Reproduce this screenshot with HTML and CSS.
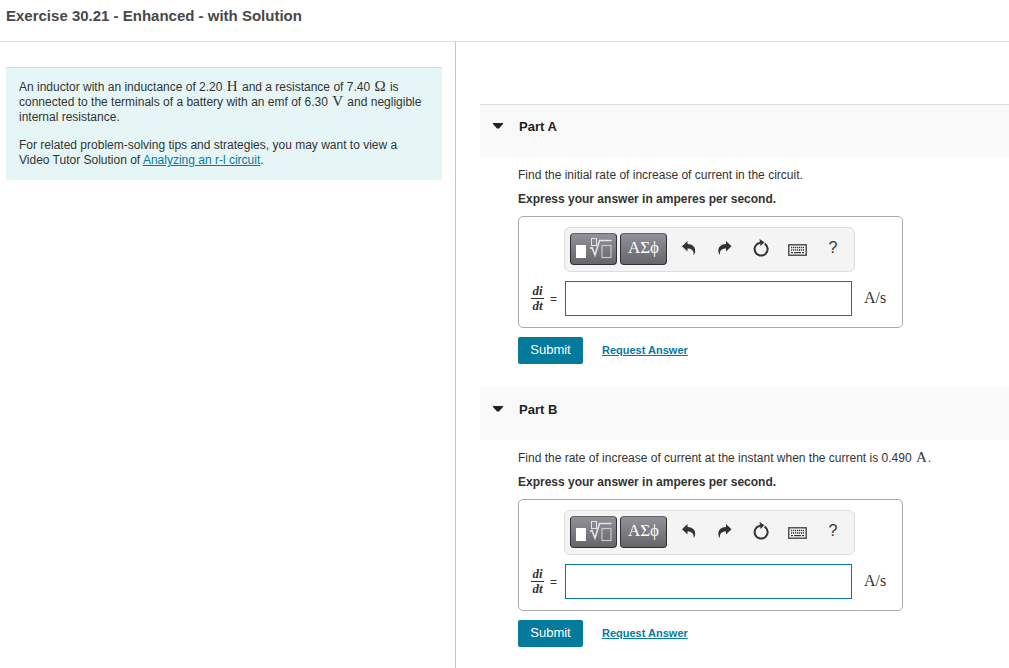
FILE: index.html
```html
<!DOCTYPE html>
<html lang="en">
<head>
<meta charset="utf-8">
<meta name="viewport" content="width=device-width, initial-scale=1">
<title>Exercise 30.21 - Enhanced - with Solution</title>
<link rel="stylesheet" href="styles.css">
</head>
<body>
<svg class="sprite" aria-hidden="true">
  <symbol id="caret" viewBox="0 0 10 6"><path d="M0 0H10V1L6 5.500H4L0 1Z" fill="#222"/></symbol>
  <symbol id="template" viewBox="0 0 36 22">
    <rect x="0" y="8" width="10" height="13" fill="#fff"/>
    <rect x="15.500" y="1.500" width="5" height="7" fill="none" stroke="#e4e4e8"/>
    <path d="M14 11.500L16 10.500L19 18L23.500 3.500H35.500" fill="none" stroke="#e4e4e8" stroke-width="1.600"/>
    <rect x="26" y="8.500" width="9" height="12" fill="none" stroke="#c9c9ce" stroke-width="1.200"/>
  </symbol>
  <symbol id="undo" viewBox="0 0 14 14"><path d="M0 5.200L5.500 0V3C10.500 3 13.200 6 13.200 9.500C13.200 11.500 12.500 13 11.600 14C12 10 10 7.600 5.500 7.600V10.400Z" fill="#333"/></symbol>
  <symbol id="redo" viewBox="0 0 14 14"><path d="M13.500 5.200L8 0V3C3 3 .3 6 .3 9.500C.3 11.500 1 13 1.900 14C1.500 10 3.500 7.600 8 7.600V10.400Z" fill="#333"/></symbol>
  <symbol id="reset" viewBox="0 0 16 18"><path d="M11.600 4.600A6.500 6.500 0 1 1 7 3.700" fill="none" stroke="#333" stroke-width="2"/><path d="M6.500 0L11.500 3.300L7.500 7Z" fill="#333"/></symbol>
  <symbol id="keyboard" viewBox="0 0 19 12">
    <rect x=".8" y=".8" width="17.400" height="10.400" fill="#fff" stroke="#444" stroke-width="1.400"/>
    <path d="M3 3.500H16M3 6H16" stroke="#333" stroke-width="1.500" stroke-dasharray="1.300 .7"/>
    <path d="M3 8.600H5M6 8.600H13M14 8.600H16" stroke="#333" stroke-width="1.300"/>
  </symbol>
</svg>

<header class="page-header">
  <h1 class="page-title">Exercise 30.21 - Enhanced - with Solution</h1>
</header>

<div class="columns">
  <aside class="intro-column">
    <div class="intro">
      <p>An inductor with an inductance of 2.20 <span class="unit">H</span> and a resistance of 7.40 <span class="unit">Ω</span> is connected to the terminals of a battery with an emf of 6.30 <span class="unit">V</span> and negligible internal resistance.</p>
      <p>For related problem-solving tips and strategies, you may want to view a Video Tutor Solution of <a href="#">Analyzing an r-l circuit</a>.</p>
    </div>
  </aside>

  <main class="parts">
    <section class="part">
      <div class="part-header">
        <button class="toggle" type="button" aria-label="Collapse Part A"><svg width="10" height="6"><use href="#caret"/></svg></button>
        <h2 class="part-title">Part A</h2>
      </div>
      <form class="part-body">
        <p class="question">Find the initial rate of increase of current in the circuit.</p>
        <p class="instruction">Express your answer in amperes per second.</p>
        <div class="answer">
          <div class="toolbar">
            <button class="palette" type="button" aria-label="Templates"><svg width="36" height="22"><use href="#template"/></svg></button>
            <button class="palette" type="button">ΑΣϕ</button>
            <div class="tools">
              <button class="tool" type="button" aria-label="Undo"><svg width="14" height="14"><use href="#undo"/></svg></button>
              <button class="tool" type="button" aria-label="Redo"><svg width="14" height="14"><use href="#redo"/></svg></button>
              <button class="tool" type="button" aria-label="Reset"><svg width="16" height="18"><use href="#reset"/></svg></button>
              <button class="tool" type="button" aria-label="Keyboard shortcuts"><svg class="keyboard" width="19" height="12"><use href="#keyboard"/></svg></button>
              <button class="tool help" type="button">?</button>
            </div>
          </div>
          <label class="lhs" for="answer-a"><span class="fraction"><i class="numerator">di</i><i>dt</i></span><span>=</span></label>
          <input class="value" id="answer-a" type="text">
          <span class="answer-unit">A/s</span>
        </div>
        <div class="actions">
          <button class="submit" type="submit">Submit</button>
          <a class="request" href="#">Request Answer</a>
        </div>
      </form>
    </section>

    <section class="part">
      <div class="part-header">
        <button class="toggle" type="button" aria-label="Collapse Part B"><svg width="10" height="6"><use href="#caret"/></svg></button>
        <h2 class="part-title">Part B</h2>
      </div>
      <form class="part-body">
        <p class="question">Find the rate of increase of current at the instant when the current is 0.490 <span class="unit">A</span>.</p>
        <p class="instruction">Express your answer in amperes per second.</p>
        <div class="answer">
          <div class="toolbar">
            <button class="palette" type="button" aria-label="Templates"><svg width="36" height="22"><use href="#template"/></svg></button>
            <button class="palette" type="button">ΑΣϕ</button>
            <div class="tools">
              <button class="tool" type="button" aria-label="Undo"><svg width="14" height="14"><use href="#undo"/></svg></button>
              <button class="tool" type="button" aria-label="Redo"><svg width="14" height="14"><use href="#redo"/></svg></button>
              <button class="tool" type="button" aria-label="Reset"><svg width="16" height="18"><use href="#reset"/></svg></button>
              <button class="tool" type="button" aria-label="Keyboard shortcuts"><svg class="keyboard" width="19" height="12"><use href="#keyboard"/></svg></button>
              <button class="tool help" type="button">?</button>
            </div>
          </div>
          <label class="lhs" for="answer-b"><span class="fraction"><i class="numerator">di</i><i>dt</i></span><span>=</span></label>
          <input class="value" id="answer-b" type="text">
          <span class="answer-unit">A/s</span>
        </div>
        <div class="actions">
          <button class="submit" type="submit">Submit</button>
          <a class="request" href="#">Request Answer</a>
        </div>
      </form>
    </section>
  </main>
</div>
</body>
</html>
```

FILE: styles.css
```css
* { box-sizing: border-box; }

body {
  display: flex;
  flex-direction: column;
  min-height: 100vh;
  margin: 0;
  background: #fff;
  color: #333;
  font: 12px/16px "Liberation Sans", Arial, sans-serif;
}

h1, h2, p { margin: 0; }
a { color: #047a9c; }
button { margin: 0; padding: 0; border: 0; background: none; font: inherit; color: inherit; cursor: pointer; }
svg { display: block; }
.sprite { position: absolute; width: 0; height: 0; }

.page-header { padding: 6px 6px 15px; border-bottom: 1px solid #ddd; }
.page-title { color: #484848; font-size: 15px; line-height: 20px; }

.columns { display: grid; grid-template-columns: 456px 1fr; flex: 1; }

.intro-column { padding: 25px 13px 0 6px; border-right: 1px solid #b9c6d8; }
.intro {
  display: grid;
  gap: 13px;
  padding: 12px 13px;
  border-top: 1px solid #d3e0e2;
  background: #e6f6f7;
  line-height: 15px;
}
.unit { padding: 0 1px; font-family: "Liberation Serif", serif; font-size: 15px; line-height: 0; }

.parts { display: grid; align-content: start; gap: 23px; padding: 62px 0 21px 24px; }
.part-header {
  display: flex;
  align-items: flex-start;
  gap: 16px;
  height: 53px;
  padding: 14px 12px 0;
  border-top: 1px solid #f9f9f9;
  background: #f9f9f9;
}
.part:first-child .part-header { border-top-color: #ddd; }
.toggle { display: grid; place-items: center; width: 11px; height: 14px; }
.part-title { color: #222; font-size: 13px; line-height: 16px; }

.part-body { padding: 10px 0 0 38px; }
.question { line-height: 16px; }
.instruction { margin-top: 8px; font-weight: bold; }

.answer {
  display: grid;
  grid-template-columns: 34px 287px 1fr;
  row-gap: 9px;
  align-items: center;
  width: 385px;
  max-width: 100%;
  margin-top: 9px;
  padding: 10px 0 11px 12px;
  border: 1px solid #aaa;
  border-radius: 5px;
}
.toolbar {
  display: flex;
  grid-column: 2 / 4;
  align-items: flex-start;
  gap: 3px;
  width: 291px;
  height: 45px;
  margin-left: -1px;
  padding: 5px 0 0 5px;
  border: 1px solid #ddd;
  border-radius: 6px;
  background: #f4f4f4;
}
.palette {
  display: grid;
  flex: none;
  place-items: center;
  width: 47px;
  height: 32px;
  padding-bottom: 2px;
  border: 1px solid #303034;
  border-top-color: #65656b;
  border-radius: 4px;
  background: linear-gradient(#919198, #66666a);
  color: #fff;
  font: 17px/18px "Liberation Serif", serif;
}
.tools { display: grid; grid-template-columns: repeat(5, 36px); margin-left: 1px; }
.tool { display: grid; place-items: center; height: 32px; padding-bottom: 2px; }
.keyboard { margin-top: 4px; }
.help { font-size: 16px; }

.lhs { display: flex; align-items: center; gap: 6px; }
.fraction { display: grid; min-width: 13px; font: bold 13px/14px "Liberation Serif", serif; text-align: center; }
.numerator { border-bottom: 1px solid #333; }
.value { width: 100%; height: 35px; padding: 0 8px; border: 1px solid #047a9c; font: inherit; }
.answer-unit { padding: 0 0 2px 12px; font: 16px/20px "Liberation Serif", serif; }

.actions { display: flex; align-items: center; gap: 19px; margin-top: 9px; }
.submit { width: 65px; height: 27px; padding-bottom: 2px; border-radius: 2px; background: #047a9c; color: #fff; font-size: 13px; }
.request { padding-bottom: 2px; font-size: 11px; font-weight: bold; }
```
